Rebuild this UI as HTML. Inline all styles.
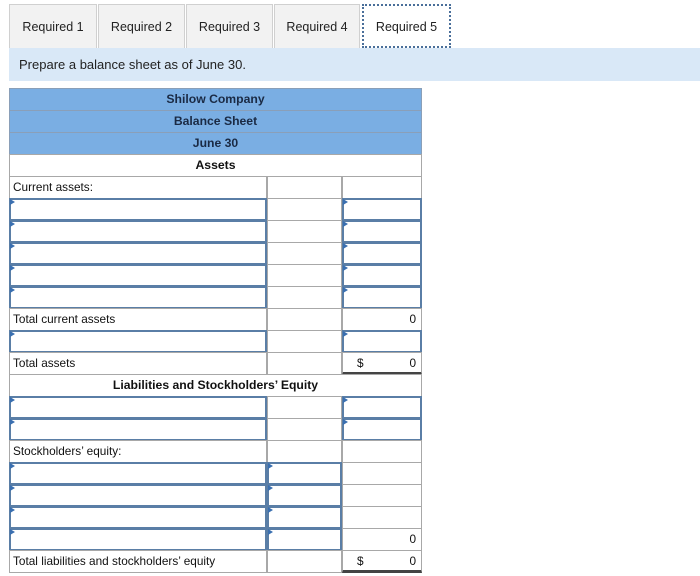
<!DOCTYPE html>
<html><head><style>
body{margin:0;width:700px;height:576px;background:#fff;font-family:"Liberation Sans",Arial,sans-serif;position:relative;overflow:hidden}
.tab{position:absolute;top:4px;height:44px;background:#f2f2f2;border:1px solid #d0d0d0;border-bottom:none;box-sizing:border-box;font-size:12.5px;color:#222;text-align:center;line-height:44px}
.tab.act{background:#fff;border:2px dotted #4a6f9a;line-height:42px}
.ban{position:absolute;left:9px;top:48px;width:691px;height:33px;background:#d9e8f7;font-size:13px;color:#222;line-height:33px;padding-left:10px;box-sizing:border-box}
.c{position:absolute;box-sizing:border-box;border:1px solid #a8a8a8;font-size:11.8px;color:#111;line-height:21px;padding:0 3px;background:#fff}
.h{background:#7aaee3;border-color:#8a9fb8;text-align:center;font-weight:bold;color:#1a2a44;font-size:12.2px}
.hb{text-align:center;font-weight:bold;font-size:12.2px}
.in{border:2px solid #5a7ea6}
.in::before{content:"";position:absolute;left:-1px;top:-1px;border-left:5px solid #3a6fb0;border-top:3px solid transparent;border-bottom:3px solid transparent}
.r{text-align:right;padding-right:5px}
.d{position:absolute;left:14px}
.tot{border-bottom:3px solid #444}
</style></head><body>
<div class="tab" style="left:9px;width:88px">Required 1</div>
<div class="tab" style="left:98px;width:87px">Required 2</div>
<div class="tab" style="left:186px;width:87px">Required 3</div>
<div class="tab" style="left:274px;width:86px">Required 4</div>
<div class="tab act" style="left:362px;width:89px">Required 5</div>
<div class="ban">Prepare a balance sheet as of June 30.</div>
<div id="t"></div>
<script>
var X=[9,267,342,422];var h='';
function cell(col,span,top,cls,txt){var l=X[col],w=X[col+span]-l;h+='<div class="c '+(cls||'')+'" style="left:'+l+'px;top:'+top+'px;width:'+w+'px;height:23px">'+(txt||'')+'</div>';}
var rows=[
['H','Shilow Company'],['H','Balance Sheet'],['H','June 30'],['B','Assets'],
['L','Current assets:','',''],
['L','#in','','#in'],['L','#in','','#in'],['L','#in','','#in'],['L','#in','','#in'],['L','#in','','#in'],
['L','Total current assets','','0'],
['L','#in','','#in'],
['L','Total assets','','$0'],
['B','Liabilities and Stockholders\u2019 Equity'],
['L','#in','','#in'],['L','#in','','#in'],
['L','Stockholders\u2019 equity:','',''],
['L','#in','#in',''],['L','#in','#in',''],['L','#in','#in',''],['L','#in','#in','0'],
['L','Total liabilities and stockholders\u2019 equity','','$0']
];
rows.forEach(function(r,i){var top=88+i*22;
 if(r[0]=='H')cell(0,3,top,'h',r[1]);
 else if(r[0]=='B')cell(0,3,top,'hb',r[1]);
 else{for(var k=0;k<3;k++){var v=r[k+1];
  if(v=='#in')cell(k,1,top,'in','');
  else if(v&&v[0]=='$')cell(k,1,top,'r tot','<span class="d">$</span>'+v.slice(1));
  else cell(k,1,top,k==2?'r':'',v);}}
});
document.getElementById('t').innerHTML=h;
</script>
</body></html>
